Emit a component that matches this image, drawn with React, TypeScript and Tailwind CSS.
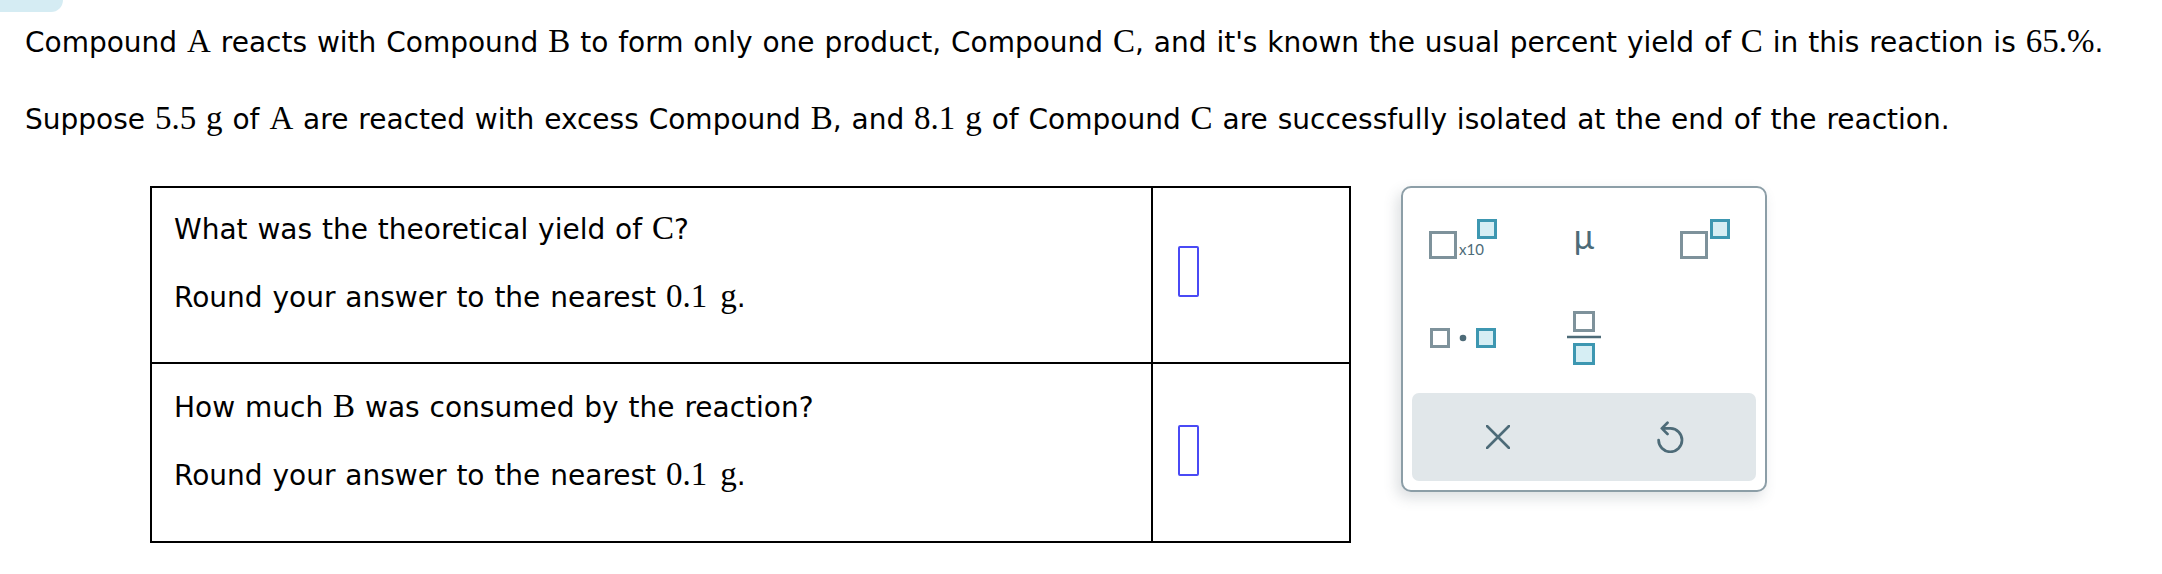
import React from "react";

const sans = "font-['DejaVu_Sans',Verdana,sans-serif]";

const M = ({ children }: { children: React.ReactNode }) => (
  <span className="font-['Liberation_Serif',serif] text-[33px]">{children}</span>
);

const AnswerBox = () => (
  <div className="w-[21px] h-[51px] border-2 border-[#4a4af5] rounded-[2px]" />
);

const Sci = () => (
  <svg width="68" height="40" viewBox="0 0 68 40">
    <rect x="1.5" y="13.5" width="25" height="25" fill="none" stroke="#7e929b" strokeWidth="3" />
    <text x="30" y="36" fontSize="15" fill="#4d6b78" fontFamily="Lato, sans-serif">x10</text>
    <rect x="49.5" y="1.5" width="17" height="17" fill="#d6eef4" stroke="#3d97b1" strokeWidth="3" />
  </svg>
);

const Sup = () => (
  <svg width="50" height="40" viewBox="0 0 50 40">
    <rect x="1.5" y="13.5" width="25" height="25" fill="none" stroke="#7e929b" strokeWidth="3" />
    <rect x="31.5" y="1.5" width="17" height="17" fill="#d6eef4" stroke="#3d97b1" strokeWidth="3" />
  </svg>
);

const Dot = () => (
  <svg width="66" height="20" viewBox="0 0 66 20">
    <rect x="1.5" y="1.5" width="17" height="17" fill="none" stroke="#7e929b" strokeWidth="3" />
    <circle cx="33" cy="10" r="3.3" fill="#4d6b78" />
    <rect x="47.5" y="1.5" width="17" height="17" fill="#d6eef4" stroke="#3d97b1" strokeWidth="3" />
  </svg>
);

const Frac = () => (
  <svg width="34" height="54" viewBox="0 0 34 54">
    <rect x="7.5" y="1.5" width="19" height="18" fill="none" stroke="#7e929b" strokeWidth="3" />
    <line x1="0" y1="26" x2="34" y2="26" stroke="#4d6b78" strokeWidth="2.5" />
    <rect x="7.5" y="33.5" width="19" height="19" fill="#d6eef4" stroke="#3d97b1" strokeWidth="3" />
  </svg>
);

const Close = () => (
  <svg width="24" height="24" viewBox="0 0 24 24">
    <path d="M1 1 L23 23 M23 1 L1 23" stroke="#4d6b78" strokeWidth="2.6" strokeLinecap="round" />
  </svg>
);

const Undo = () => (
  <svg width="30" height="32" viewBox="14 12 30 32">
    <path
      d="M17.6 31 A11.7 11.7 0 1 0 29.5 19.4 L21 19.4 M26.5 13.8 L20.8 19.4 L26.5 25"
      fill="none"
      stroke="#4d6b78"
      strokeWidth="2.7"
      strokeLinecap="round"
      strokeLinejoin="round"
    />
  </svg>
);

const Row = ({
  first,
  last,
  pad,
  top,
}: {
  first: React.ReactNode;
  last?: boolean;
  pad: string;
  top: string;
}) => (
  <div className={`flex ${last ? "h-[177px]" : "h-[176px] border-b-2 border-black"}`}>
    <div className={`w-[999px] pl-[22px] ${top} text-[28px] leading-[34px] text-black whitespace-nowrap [word-spacing:1px]`}>
      <div>{first}</div>
      <div className="mt-[32px]">
        Round your answer to the nearest <M>0.1</M>
        <span className="inline-block w-[13px]" />
        <M>g</M>.
      </div>
    </div>
    <div className={`flex-1 border-l-2 border-black pl-[25px] ${pad}`}>
      <AnswerBox />
    </div>
  </div>
);

export default function App() {
  return (
    <div className={`relative min-h-[574px] bg-white ${sans}`}>
      <div className="absolute left-0 top-0 w-[63px] h-[12px] bg-[#d5ecf3] rounded-br-[12px]" />

      <div className="px-[25px] pt-[24px] text-[28px] leading-[34px] text-black [word-spacing:1px]">
        <div className="whitespace-nowrap">
          Compound <M>A</M> reacts with Compound <M>B</M> to form only one product, Compound <M>C</M>,
          and it's known the usual percent yield of <M>C</M> in this reaction is <M>65.%</M>.
        </div>
        <div className="mt-[41px] whitespace-nowrap">
          Suppose <M>5.5</M> <M>g</M> of <M>A</M> are reacted with excess Compound <M>B</M>, and{" "}
          <M>8.1</M> <M>g</M> of Compound <M>C</M> are successfully isolated at the end of the reaction.
        </div>
      </div>

      <div className="flex items-start pl-[150px] mt-[49px]">
        <div className="w-[1201px] border-2 border-black">
          <Row first={<>What was the theoretical yield of <M>C</M>?</>} pad="pt-[58px]" top="pt-[23px]" />
          <Row first={<>How much <M>B</M> was consumed by the reaction?</>} pad="pt-[61px]" top="pt-[25px]" last />
        </div>

        <div className="ml-[50px] w-[366px] h-[306px] border-2 border-[#8c9ea7] rounded-[10px] bg-white shadow-[-4px_6px_14px_rgba(60,80,90,0.18)] flex flex-col">
          <div className="grid grid-cols-3 h-[102px] items-center justify-items-center">
            <Sci />
            <span className="font-['Lato',sans-serif] text-[34px] leading-none text-[#4d6b78] -mt-[6px]">μ</span>
            <Sup />
          </div>
          <div className="grid grid-cols-3 h-[96px] items-center justify-items-center">
            <Dot />
            <Frac />
            <div />
          </div>
          <div className="mt-[7px] mx-[9px] h-[88px] rounded-[7px] bg-[#e1e7ea] grid grid-cols-2 items-center justify-items-center">
            <Close />
            <Undo />
          </div>
        </div>
      </div>
    </div>
  );
}
